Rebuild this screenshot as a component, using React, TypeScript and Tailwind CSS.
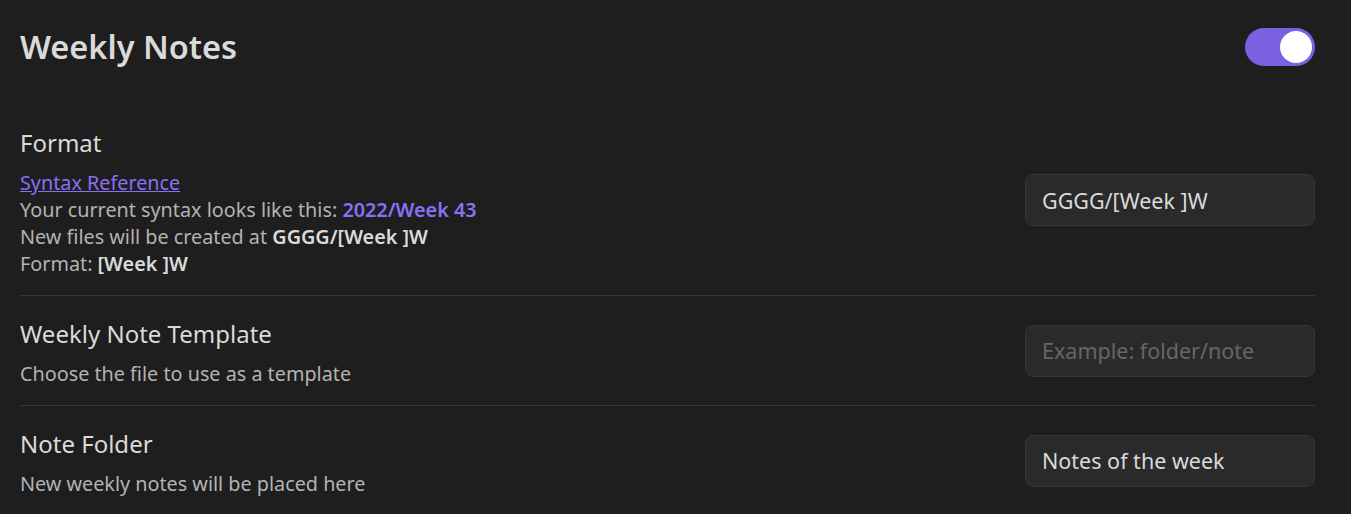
import { useState } from 'react';

function Toggle({ on, onChange }: { on: boolean; onChange: (v: boolean) => void }) {
  return (
    <button
      onClick={() => onChange(!on)}
      className={`relative h-[38px] w-[70px] rounded-full transition-colors ${on ? 'bg-[#7b61e0]' : 'bg-[#3f3f3f]'}`}
    >
      <span
        className={`absolute top-[3px] h-[32px] w-[32px] rounded-full bg-white transition-all ${on ? 'left-[35px]' : 'left-[3px]'}`}
      />
    </button>
  );
}

function SettingRow({
  name,
  children,
  control,
  last,
}: {
  name: string;
  children: React.ReactNode;
  control: React.ReactNode;
  last?: boolean;
}) {
  return (
    <div className={`flex items-center justify-between pt-[22px] pb-[18px] ${last ? '' : 'border-b border-[#363636]'}`}>
      <div className="flex flex-col">
        <div className="text-[24px] leading-[32px] text-[#dadada]">{name}</div>
        <div className="mt-[10px] text-[19.8px] leading-[27px] text-[#b3b3b3]">{children}</div>
      </div>
      {control}
    </div>
  );
}

function TextInput({ value, placeholder }: { value?: string; placeholder?: string }) {
  const [text, setText] = useState(value ?? '');
  return (
    <input
      value={text}
      placeholder={placeholder}
      onChange={(e) => setText(e.target.value)}
      className="mb-[4px] h-[52px] w-[290px] rounded-[8px] border border-[#363636] bg-[#2a2a2a] px-[16px] text-[21.5px] text-[#dadada] outline-none placeholder:text-[#666666]"
    />
  );
}

export default function App() {
  const [enabled, setEnabled] = useState(true);

  return (
    <div
      className="min-h-screen bg-[#1e1e1e] pl-[20px] pr-[36px]"
      style={{ fontFamily: '"Noto Sans", "Open Sans", sans-serif' }}
    >
      <div className="mb-[10px] flex h-[95px] items-center justify-between pb-[1px]">
        <h2 className="text-[32.5px] font-semibold text-[#dadada]">Weekly Notes</h2>
        <Toggle on={enabled} onChange={setEnabled} />
      </div>

      <SettingRow name="Format" control={<TextInput value="GGGG/[Week ]W" />}>
        <a href="#" className="text-[#8a70f5] underline">
          Syntax Reference
        </a>
        <div>
          Your current syntax looks like this:{' '}
          <b className="font-semibold text-[#8a70f5]">2022/Week 43</b>
        </div>
        <div>
          New files will be created at <b className="font-semibold text-[#dadada]">GGGG/[Week ]W</b>
        </div>
        <div>
          Format: <b className="font-semibold text-[#dadada]">[Week ]W</b>
        </div>
      </SettingRow>

      <SettingRow name="Weekly Note Template" control={<TextInput placeholder="Example: folder/note" />}>
        Choose the file to use as a template
      </SettingRow>

      <SettingRow name="Note Folder" control={<TextInput value="Notes of the week" />} last>
        New weekly notes will be placed here
      </SettingRow>
    </div>
  );
}
